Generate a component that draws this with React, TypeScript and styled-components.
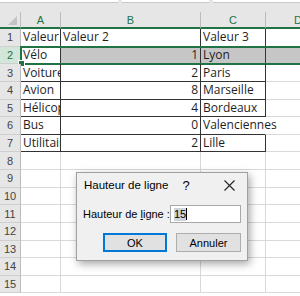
import styled, {createGlobalStyle} from 'styled-components'

const GlobalStyle = createGlobalStyle`
  body{
    margin: 0;
    background: #ffffff;
    font-family: "Open Sans", "Liberation Sans", sans-serif;
  }
`

const rows = [
  {a: 'Valeur 1', b: 'Valeur 2', c: 'Valeur 3'},
  {a: 'Vélo', b: '1', c: 'Lyon'},
  {a: 'Voiture', b: '2', c: 'Paris'},
  {a: 'Avion', b: '8', c: 'Marseille'},
  {a: 'Hélicoptère', b: '4', c: 'Bordeaux'},
  {a: 'Bus', b: '0', c: 'Valenciennes', overflow: true},
  {a: 'Utilitaire', b: '2', c: 'Lille'},
]

const ROW_H = 17.64
const COLS = '21px 40px 140px 65px 65px'

export default function App() {
  const extra = Array.from({length: 8}, (_, i) => i + 8)

  return (
    <>
      <GlobalStyle />
      <Page>
        <TopBar>
          <NameBox />
          <FormulaBox />
          <FormulaBox />
        </TopBar>
        <Sheet>
          <HeadRow>
            <Corner><CornerMark /></Corner>
            {['A', 'B', 'C', 'D'].map(c => (
              <ColHead key={c}>{c}</ColHead>
            ))}
          </HeadRow>

          {rows.map((r, i) => {
            const n = i + 1
            const sel = n === 2
            return (
              <Row key={n}>
                <RowHead $selected={sel}>{n}</RowHead>
                <Cell $dark>{r.a}</Cell>
                <Cell $dark $shade={sel} $align={i === 0 ? 'left' : 'right'}>{r.b}</Cell>
                <Cell $dark $shade={sel} $overflow={r.overflow}>{r.c}</Cell>
                <Cell $shade={sel} />
                {sel && <RowSelection><FillHandle /></RowSelection>}
              </Row>
            )
          })}

          {extra.map(n => (
            <Row key={n}>
              <RowHead>{n}</RowHead>
              <Cell />
              <Cell />
              <Cell />
              <Cell />
            </Row>
          ))}
        </Sheet>

        <Dialog>
          <TitleBar>
            <Title>Hauteur de ligne</Title>
            <TitleButton>?</TitleButton>
            <CloseButton>
              <svg width="11" height="11" viewBox="0 0 11 11">
                <path d="M0.5 0.5 L10.5 10.5 M10.5 0.5 L0.5 10.5" stroke="#222" strokeWidth="1.1" fill="none" />
              </svg>
            </CloseButton>
          </TitleBar>
          <Body>
            <Field>
              <Label>Hauteur de <u>l</u>igne :</Label>
              <Input>
                <Selected>15</Selected>
                <Caret />
              </Input>
            </Field>
            <Buttons>
              <Button $primary>OK</Button>
              <Button>Annuler</Button>
            </Buttons>
          </Body>
        </Dialog>
      </Page>
    </>
  )
}

const Page = styled.div`
  position: relative;
  width: 300px;
  height: 296px;
  overflow: hidden;
  background: #ffffff;
`

const TopBar = styled.div`
  height: 12px;
  display: flex;
  gap: 4px;
  align-items: flex-start;
  background: #e6e6e6;
`

const NameBox = styled.div`
  width: 118px;
  height: 2px;
  background: #ffffff;
  border-bottom: 1px solid #c8c8c8;
`

const FormulaBox = styled.div`
  flex: 1;
  height: 2px;
  background: #ffffff;
  border-bottom: 1px solid #c8c8c8;
`

const Sheet = styled.div`
  display: flex;
  flex-direction: column;
  width: 331px;
  font-size: 12px;
  color: #1e1e1e;
`

const HeadRow = styled.div`
  display: grid;
  grid-template-columns: ${COLS};
  height: 17px;
`

const Row = styled.div`
  position: relative;
  display: grid;
  grid-template-columns: ${COLS};
  height: ${ROW_H}px;
  flex-shrink: 0;
`

const Corner = styled.div`
  background: #e6e6e6;
  border-right: 1px solid #bcbcbc;
  border-bottom: 2px solid #217346;
  position: relative;
`

const CornerMark = styled.div`
  position: absolute;
  right: 3px;
  bottom: 2px;
  width: 0;
  height: 0;
  border-left: 9px solid transparent;
  border-bottom: 9px solid #c3c3c3;
`

const ColHead = styled.div`
  background: #e6e6e6;
  border-right: 1px solid #bcbcbc;
  border-bottom: 2px solid #217346;
  color: #217346;
  font-family: "Liberation Sans", sans-serif;
  font-size: 11px;
  display: flex;
  align-items: center;
  justify-content: center;
`

const RowHead = styled.div<{$selected?: boolean}>`
  background: ${p => p.$selected ? '#d2e6da' : '#e6e6e6'};
  color: ${p => p.$selected ? '#217346' : '#444'};
  border-right: 1px solid ${p => p.$selected ? '#217346' : '#bcbcbc'};
  border-bottom: 1px solid #cfcfcf;
  font-family: "Liberation Sans", sans-serif;
  font-size: 11px;
  display: flex;
  align-items: center;
  justify-content: center;
`

const Cell = styled.div<{$dark?: boolean; $shade?: boolean; $align?: string; $overflow?: boolean}>`
  min-width: 0;
  background: ${p => p.$shade ? '#c6c6c6' : 'transparent'};
  border-right: 1px solid ${p => p.$overflow ? 'transparent' : p.$dark ? '#333' : '#d9d9d9'};
  border-bottom: 1px solid ${p => p.$dark ? '#333' : '#d9d9d9'};
  padding: 0 2px;
  display: flex;
  align-items: center;
  justify-content: ${p => p.$align === 'right' ? 'flex-end' : 'flex-start'};
  white-space: nowrap;
  overflow: ${p => p.$overflow ? 'visible' : 'hidden'};
  line-height: 1;
`

const RowSelection = styled.div`
  position: absolute;
  left: 20px;
  right: -2px;
  top: -1px;
  bottom: -1px;
  border: 2px solid #217346;
  pointer-events: none;
`

const FillHandle = styled.div`
  position: absolute;
  left: -4px;
  bottom: -4px;
  width: 5px;
  height: 5px;
  background: #217346;
  border: 1px solid #ffffff;
`

const Dialog = styled.div`
  position: absolute;
  left: 76px;
  top: 172px;
  width: 170px;
  height: 87px;
  background: #f0f0f0;
  border: 1px solid #a0a0a0;
  box-shadow: 2px 3px 8px rgba(0,0,0,0.35);
  display: flex;
  flex-direction: column;
  font-family: "Liberation Sans", sans-serif;
  font-size: 11px;
  color: #000;
`

const TitleBar = styled.div`
  height: 24px;
  display: flex;
  align-items: center;
  padding-left: 7px;
`

const Title = styled.div`
  flex: 1;
  font-size: 11.5px;
`

const TitleButton = styled.div`
  width: 18px;
  margin-right: 16px;
  text-align: center;
  font-size: 13px;
`

const CloseButton = styled.div`
  width: 36px;
  display: flex;
  justify-content: center;
`

const Body = styled.div`
  display: flex;
  flex-direction: column;
  padding: 8px 6px 0 6px;
  gap: 10px;
`

const Field = styled.div`
  display: flex;
  align-items: center;
  justify-content: space-between;
`

const Label = styled.span`
  u{
    text-decoration: underline;
  }
`

const Input = styled.div`
  width: 66px;
  height: 16px;
  background: #ffffff;
  border: 1px solid #a8a8a8;
  display: flex;
  align-items: center;
  padding-left: 3px;
`

const Selected = styled.span`
  background: #cfd3da;
  color: #000;
  font-size: 11px;
  line-height: 13px;
`

const Caret = styled.span`
  width: 1px;
  height: 12px;
  background: #000;
`

const Buttons = styled.div`
  display: flex;
  justify-content: flex-end;
  gap: 9px;
`

const Button = styled.div<{$primary?: boolean}>`
  width: ${p => p.$primary ? '60px' : '63px'};
  height: ${p => p.$primary ? '15px' : '17px'};
  background: #e1e1e1;
  border: ${p => p.$primary ? '2px solid #0078d7' : '1px solid #adadad'};
  display: flex;
  align-items: center;
  justify-content: center;
  font-size: 11px;
`
